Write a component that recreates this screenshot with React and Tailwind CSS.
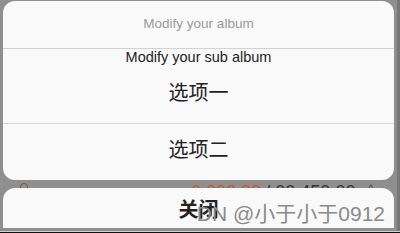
import React from 'react';

const Sheet = () => {
  return (
    <div className="relative w-[400px] h-[233px] overflow-hidden bg-[#8f8f8f] font-['Liberation_Sans','Noto_Sans_CJK_SC',sans-serif]">
      <div className="flex h-[231px]">
        <div className="flex flex-col flex-1 pl-[3px] pr-[3px] pt-[1px]">
          <div className="flex flex-col h-[179px] rounded-[12px] bg-[#f9f9f9] overflow-hidden">
            <div className="h-[47px] flex items-center justify-center text-[13.5px] text-[#999999]">
              Modify your album
            </div>
            <div className="h-px bg-[#d2d2d2]" />
            <div className="h-[17px] flex items-center justify-center text-[14.5px] text-[#222222]">
              Modify your sub album
            </div>
            <div className="h-[57px] flex items-center justify-center pb-[3px] text-[20px] text-[#222222]">
              选项一
            </div>
            <div className="h-px bg-[#d6d6d6]" />
            <div className="h-[56px] flex items-center justify-center pb-[4px] text-[20px] text-[#222222]">
              选项二
            </div>
          </div>
          <div className="h-[8px] overflow-hidden flex items-start pt-[3px] text-[18px] leading-none">
            <div className="w-[17px]" />
            <div className="w-[8px] h-[9px] rounded-full border border-[#6b5a4a]" />
            <div className="flex-1" />
            <span className="text-[#c8561f]">0,000.00</span>
            <span className="text-[#333333] ml-[4px]">/ 00,450.00</span>
            <span className="text-[#555555] ml-[12px] mr-[20px] text-[14px]">^</span>
          </div>
          <div className="h-[40px] rounded-t-[12px] bg-[#f9f9f9] flex items-center justify-center pt-[4px] text-[20px] font-bold text-[#222222]">
            关闭
          </div>
        </div>
        <div className="w-[3px] bg-[#777777]" />
      </div>
      <div className="h-px bg-[#d0d0d0]" />
      <div className="h-px bg-[#111111]" />
      <div className="absolute right-[15px] top-[203px] text-[21px] leading-none text-[#8a8a8a]">
        DN @小于小于0912
      </div>
    </div>
  );
};

export default function App() {
  return <Sheet />;
}
